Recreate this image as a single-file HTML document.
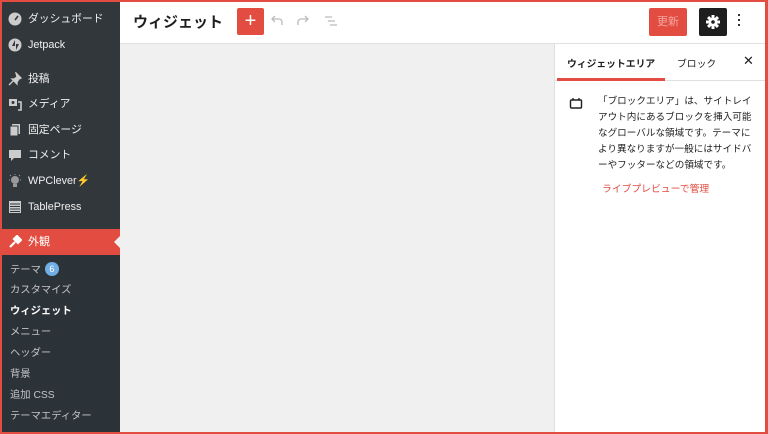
<!DOCTYPE html>
<html><head><meta charset="utf-8"><style>
*{box-sizing:border-box;margin:0;padding:0}
body{width:768px;height:434px;overflow:hidden;font-family:"Liberation Sans","Noto Sans CJK JP",sans-serif;background:#e24c41;position:relative}
#wrap{position:absolute;left:2px;top:2px;width:763px;height:430px;background:#f0f0f0;overflow:hidden}
#side{position:absolute;left:0;top:0;width:118px;height:430px;background:#2c3338}
#side .top{position:absolute;left:0;top:0;width:118px;height:227px;background:#32373c}
.mi{position:absolute;left:0;width:118px;height:20px;color:#f0f0f0;font-size:10.8px;line-height:20px;padding-left:26px}
.mi svg{position:absolute;left:6px;top:3px}
.act{position:absolute;left:0;top:227px;width:118px;height:26px;background:#e24c41;color:#fff;font-size:11px;line-height:26px;padding-left:26px}
.act:after{content:"";position:absolute;right:0;top:7px;border:6px solid transparent;border-right-color:#f0f0f0}
.sm{position:absolute;left:8px;color:#c3c4c7;font-size:10.3px;line-height:16px}
.badge{display:inline-block;width:14px;height:14px;border-radius:7px;background:#72aee6;color:#fff;font-size:9px;text-align:center;line-height:14px;margin-left:4px;vertical-align:1px}
#hdr{position:absolute;left:118px;top:0;width:645px;height:42px;background:#fff;border-bottom:1px solid #e0e0e0}
#panel{position:absolute;left:552px;top:42px;width:211px;height:388px;background:#fff;border-left:1px solid #e0e0e0}
</style></head><body><div id="wrap">
<div id="side"><div class="top"></div>
<div class="mi" style="top:7px"><svg width="14" height="14"><circle cx="7" cy="7" r="6.5" fill="#ccc"/><path d="M7 8 L10 4" stroke="#32373c" stroke-width="1.6"/></svg>ダッシュボード</div>
<div class="mi" style="top:33px"><svg width="14" height="14"><circle cx="7" cy="7" r="6.5" fill="#ccc"/><path d="M7 2v6H4zM8 12V6h3z" fill="#32373c"/></svg>Jetpack</div>
<div class="mi" style="top:67px"><svg width="14" height="14"><path d="M8 1l5 5-2 1-2 3 0 2-5-5 2 0 3-2zM5 9l-4 4" fill="#ccc" stroke="#ccc" stroke-width="1.3"/></svg>投稿</div>
<div class="mi" style="top:92px"><svg width="14" height="14"><rect x="1" y="2" width="8" height="7" fill="#ccc"/><circle cx="5" cy="5.5" r="1.5" fill="#32373c"/><path d="M10 5h3v8h-3" stroke="#ccc" stroke-width="1.6" fill="none"/></svg>メディア</div>
<div class="mi" style="top:118px"><svg width="14" height="14"><rect x="4" y="1" width="8" height="10" fill="#ccc"/><rect x="2" y="3" width="8" height="10" fill="#ccc" stroke="#32373c"/></svg>固定ページ</div>
<div class="mi" style="top:143px"><svg width="14" height="14"><path d="M1 2h12v8H6l-3 3v-3H1z" fill="#ccc"/></svg>コメント</div>
<div class="mi" style="top:169px"><svg width="14" height="14"><circle cx="7" cy="6" r="4" fill="#999"/><rect x="5" y="10" width="4" height="3" fill="#999"/><path d="M7 0v1M1 6h1M12 6h1M2 1l1 1M12 1l-1 1" stroke="#999"/></svg>WPClever<span style="color:#f0b849">⚡</span></div>
<div class="mi" style="top:195px"><svg width="14" height="14"><rect x="1" y="1" width="12" height="12" fill="#ccc"/><path d="M2 4h10M2 6.5h10M2 9h10M2 11.5h10" stroke="#32373c"/></svg>TablePress</div>
<div class="act"><svg width="14" height="14" style="position:absolute;left:6px;top:6px"><path d="M2 12l5-5M6 4l4 4 3-3-4-4z" stroke="#fff" stroke-width="2.2" fill="#fff"/></svg>外観</div>
<div class="sm" style="top:260px">テーマ<span class="badge">6</span></div>
<div class="sm" style="top:281px">カスタマイズ</div>
<div class="sm" style="top:302px;color:#fff;font-weight:bold">ウィジェット</div>
<div class="sm" style="top:323px">メニュー</div>
<div class="sm" style="top:344px">ヘッダー</div>
<div class="sm" style="top:365px">背景</div>
<div class="sm" style="top:386px">追加 CSS</div>
<div class="sm" style="top:407px">テーマエディター</div>
</div>
<div id="hdr">
<div style="position:absolute;left:13px;top:9px;font-size:15px;font-weight:bold;color:#1e1e1e">ウィジェット</div>
<div style="position:absolute;left:117px;top:6px;width:27px;height:27px;background:#e24c41;border-radius:2px;color:#fff;font-size:20px;line-height:26px;text-align:center">+</div>
<svg style="position:absolute;left:150px;top:13px" width="14" height="12"><path d="M12 10V7a3 3 0 0 0-3-3H2M5 1L2 4l3 3" stroke="#bbb" stroke-width="1.3" fill="none"/></svg>
<svg style="position:absolute;left:176px;top:13px" width="14" height="12"><path d="M2 10V7a3 3 0 0 1 3-3h7M9 1l3 3-3 3" stroke="#bbb" stroke-width="1.3" fill="none"/></svg>
<svg style="position:absolute;left:204px;top:13px" width="14" height="12"><path d="M1 2h7M4 6h7M6 10h7" stroke="#bbb" stroke-width="1.3"/></svg>
<div style="position:absolute;left:529px;top:6px;width:38px;height:28px;background:#e24c41;border-radius:2px;color:#f4a7a1;font-size:11px;line-height:28px;text-align:center">更新</div>
<div style="position:absolute;left:579px;top:6px;width:28px;height:28px;background:#1e1e1e;border-radius:2px"><svg width="28" height="28"><g transform="translate(14 14)" fill="#fff"><circle r="4.5"/><path d="M-1.5-7h3v14h-3zM-7-1.5h14v3h-14z"/><path d="M-1.5-7h3v14h-3zM-7-1.5h14v3h-14z" transform="rotate(45)"/><circle r="1.8" fill="#1e1e1e"/></g></svg></div>
<div style="position:absolute;left:618px;top:12px;width:3px"><div style="width:2px;height:2px;background:#333;margin-bottom:3px"></div><div style="width:2px;height:2px;background:#333;margin-bottom:3px"></div><div style="width:2px;height:2px;background:#333"></div></div>
</div>
<div id="panel">
<div style="position:absolute;left:0;top:0;width:210px;height:37px;border-bottom:1px solid #e0e0e0"></div>
<div style="position:absolute;left:12px;top:12px;font-size:9.8px;font-weight:bold;color:#1e1e1e">ウィジェットエリア</div>
<div style="position:absolute;left:2px;top:34px;width:108px;height:3px;background:#e24c41"></div>
<div style="position:absolute;left:122px;top:12px;font-size:9.8px;color:#1e1e1e">ブロック</div>
<div style="position:absolute;left:188px;top:9px;font-size:13px;color:#1e1e1e">✕</div>
<svg style="position:absolute;left:14px;top:53px" width="14" height="12"><rect x="1.5" y="3" width="11" height="8" rx="1" stroke="#1e1e1e" stroke-width="1.4" fill="none"/><path d="M4 1v2M10 1v2" stroke="#1e1e1e" stroke-width="1.4"/></svg>
<div style="position:absolute;left:43px;top:50px;width:156px;font-size:9.6px;line-height:16px;color:#1e1e1e">「ブロックエリア」は、サイトレイアウト内にあるブロックを挿入可能なグローバルな領域です。テーマにより異なりますが一般にはサイドバーやフッターなどの領域です。</div>
<div style="position:absolute;left:47px;top:137px;font-size:9.8px;color:#e24c41">ライブプレビューで管理</div>
</div>
</div></body></html>
